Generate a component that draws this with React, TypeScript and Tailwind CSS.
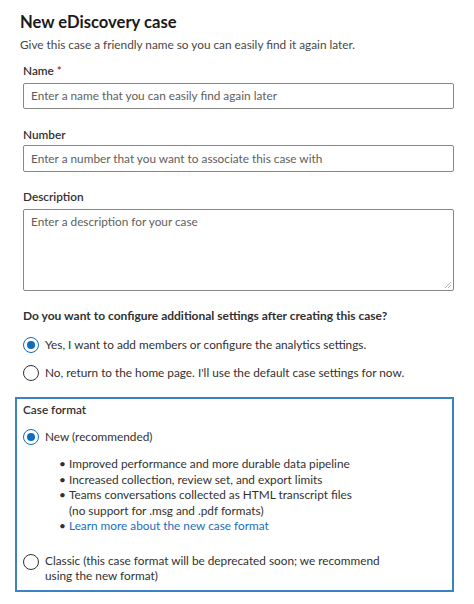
import React from "react";

function Radio({ checked }: { checked?: boolean }) {
  return (
    <span
      className={
        checked
          ? "flex h-[16px] w-[16px] shrink-0 items-center justify-center rounded-full border border-[#0f6cbd]"
          : "flex h-[16px] w-[16px] shrink-0 items-center justify-center rounded-full border border-[#323130]"
      }
    >
      {checked && <span className="h-[8px] w-[8px] rounded-full bg-[#0f6cbd]" />}
    </span>
  );
}

function Bullet({ children }: { children: React.ReactNode }) {
  return (
    <li className="flex">
      <span className="w-[10px] shrink-0">•</span>
      <span>{children}</span>
    </li>
  );
}

export default function App() {
  return (
    <div className="h-[604px] w-[474px] overflow-hidden bg-white font-['Lato',sans-serif] text-[11.8px] text-[#323130]">
      <div className="pl-[15px] pr-[20px] pt-[10px]">
        <h1 className="pl-[5px] text-[16.6px] font-bold leading-[24px] text-[#1b1a19]">
          New eDiscovery case
        </h1>
        <p className="mt-[2px] pl-[5px] leading-[18px] text-[#484644]">
          Give this case a friendly name so you can easily find it again later.
        </p>

        <div className="pl-[8px]">
          <div className="mt-[8px] font-semibold leading-[18px]">
            Name <span className="text-[#a4262c]">*</span>
          </div>
          <div className="mt-[3px] flex h-[26px] items-center rounded-[2px] border border-[#8a8886] px-[7px] text-[#605e5c]">
            Enter a name that you can easily find again later
          </div>

          <div className="mt-[17px] font-semibold leading-[18px]">Number</div>
          <div className="mt-[1px] flex h-[27px] items-center rounded-[2px] border border-[#8a8886] px-[7px] text-[#605e5c]">
            Enter a number that you want to associate this case with
          </div>

          <div className="mt-[16px] font-semibold leading-[18px]">Description</div>
          <div className="relative mt-[3px] h-[82px] rounded-[2px] border border-[#8a8886] px-[7px] pt-[3px] leading-[18px] text-[#605e5c]">
            Enter a description for your case
            <svg className="absolute bottom-[1px] right-[1px]" width="8" height="8" viewBox="0 0 8 8">
              <path d="M7 1 L1 7 M7 4 L4 7" stroke="#b3b0ad" strokeWidth="1" />
            </svg>
          </div>

          <div className="mt-[16px] text-[12px] font-bold leading-[18px]">
            Do you want to configure additional settings after creating this case?
          </div>
          <div className="mt-[11px] flex h-[18px] items-center gap-[6px]">
            <Radio checked />
            <span>Yes, I want to add members or configure the analytics settings.</span>
          </div>
          <div className="mt-[10px] flex h-[18px] items-center gap-[6px]">
            <Radio />
            <span>No, return to the home page. I&apos;ll use the default case settings for now.</span>
          </div>
        </div>

        <div className="mt-[15px] h-[195px] border-2 border-[#3a82c6] pl-[6px] pt-[2px]">
          <div className="font-semibold leading-[18px]">Case format</div>
          <div className="mt-[9px] flex h-[18px] items-center gap-[6px]">
            <Radio checked />
            <span>New (recommended)</span>
          </div>
          <ul className="mt-[10px] pl-[36px] leading-[15.5px]">
            <Bullet>Improved performance and more durable data pipeline</Bullet>
            <Bullet>Increased collection, review set, and export limits</Bullet>
            <Bullet>
              Teams conversations collected as HTML transcript files
              <br />
              (no support for .msg and .pdf formats)
            </Bullet>
            <Bullet>
              <span className="text-[#1a6fba]">Learn more about the new case format</span>
            </Bullet>
          </ul>
          <div className="mt-[19px] flex items-start gap-[6px] leading-[15.5px]">
            <span className="mt-[1px]">
              <Radio />
            </span>
            <span>
              Classic (this case format will be deprecated soon; we recommend
              <br />
              using the new format)
            </span>
          </div>
        </div>
      </div>
    </div>
  );
}
